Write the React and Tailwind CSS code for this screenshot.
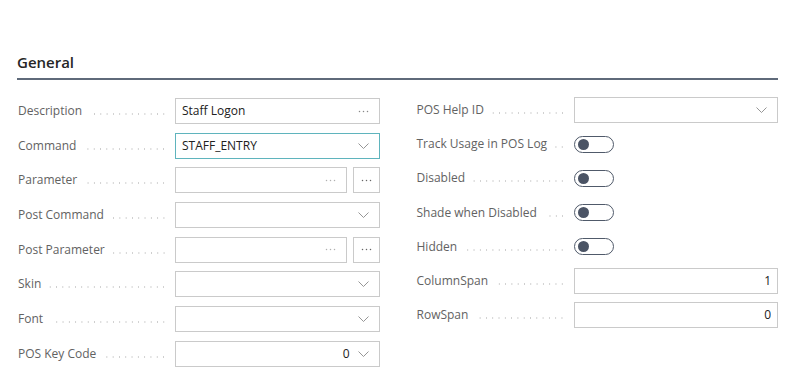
import React from "react";

const leftFields = [
  { label: "Description", kind: "text", value: "Staff Logon", ellipsis: true },
  { label: "Command", kind: "select", value: "STAFF_ENTRY", focused: true },
  { label: "Parameter", kind: "lookup" },
  { label: "Post Command", kind: "select" },
  { label: "Post Parameter", kind: "lookup" },
  { label: "Skin", kind: "select" },
  { label: "Font", kind: "select" },
  { label: "POS Key Code", kind: "select", value: "0", right: true },
];

const rightFields = [
  { label: "POS Help ID", kind: "select" },
  { label: "Track Usage in POS Log", kind: "toggle" },
  { label: "Disabled", kind: "toggle" },
  { label: "Shade when Disabled", kind: "toggle" },
  { label: "Hidden", kind: "toggle" },
  { label: "ColumnSpan", kind: "number", value: "1" },
  { label: "RowSpan", kind: "number", value: "0" },
];

const Chevron = () => (
  <svg width="11" height="6" viewBox="0 0 11 6" fill="none" className="shrink-0">
    <path d="M0.5 0.5 L5.5 5.5 L10.5 0.5" stroke="#8a8a8a" strokeWidth="0.9" />
  </svg>
);

const Dots = ({ className = "text-[#9a9a9a]" }) => (
  <svg width="11" height="3" viewBox="0 0 11 3" className={className}>
    <circle cx="1.5" cy="1.5" r="0.75" fill="currentColor" />
    <circle cx="5.5" cy="1.5" r="0.75" fill="currentColor" />
    <circle cx="9.5" cy="1.5" r="0.75" fill="currentColor" />
  </svg>
);

const Toggle = () => (
  <div className="flex h-[17px] w-[40px] items-center rounded-full border border-[#505a6a] pl-[3px]">
    <div className="h-[11px] w-[11px] rounded-full bg-[#4b5465]" />
  </div>
);

const Field = ({ f }) => {
  if (f.kind === "toggle") return <Toggle />;
  const box =
    "flex h-[26px] items-center border bg-white px-[6px] text-[12px] text-[#212121] " +
    (f.focused ? "border-[#5fb4bd]" : "border-[#cacaca]");
  if (f.kind === "lookup")
    return (
      <div className="flex w-full gap-[6px]">
        <div className={box + " flex-1 justify-end pr-[10px]"}>
          <Dots className="text-[#b0b0b0]" />
        </div>
        <div className="flex h-[26px] w-[27px] items-center justify-center border border-[#cacaca] bg-white">
          <Dots className="text-[#666]" />
        </div>
      </div>
    );
  return (
    <div className={box + " w-full"}>
      <span className={"flex-1 truncate " + (f.right || f.kind === "number" ? "text-right" : "")}>
        {f.value}
      </span>
      {f.kind === "select" && (
        <span className="ml-[8px] mr-[4px] flex items-center">
          <Chevron />
        </span>
      )}
      {f.ellipsis && (
        <span className="ml-[8px] mr-[4px] flex items-center">
          <Dots className="text-[#888]" />
        </span>
      )}
    </div>
  );
};

const Row = ({ f }) => (
  <div className="flex h-[26px] items-center">
    <div className="flex w-[157px] shrink-0 items-center pr-[8px]">
      <span className="whitespace-nowrap text-[12px] text-[#626262]">{f.label}</span>
      <span className="mb-[5px] ml-[8px] h-[2px] flex-1 self-end bg-[radial-gradient(circle,#cdcdcd_0.7px,transparent_1px)] bg-[length:6.3px_2px] bg-right bg-repeat-x" />
    </div>
    <div className="flex w-[205px] items-center">
      <Field f={f} />
    </div>
  </div>
);

export default function App() {
  return (
    <div
      className="h-[378px] w-[800px] bg-white pl-[17px] pr-[22px] pt-[52px]"
      style={{ fontFamily: '"Open Sans", "Noto Sans", sans-serif' }}
    >
      <div className="border-b-2 border-[#5f6a7a] pb-[6px]">
        <h2 className="text-[15px] font-semibold leading-[20px] text-[#262626]">General</h2>
      </div>
      <div className="mt-[17px] grid grid-cols-2 gap-x-[37px] pl-[1px]">
        <div className="flex flex-col gap-[8.7px] pt-[1px]">
          {leftFields.map((f) => (
            <Row key={f.label} f={f} />
          ))}
        </div>
        <div className="flex flex-col gap-[8.2px]">
          {rightFields.map((f) => (
            <Row key={f.label} f={f} />
          ))}
        </div>
      </div>
    </div>
  );
}
